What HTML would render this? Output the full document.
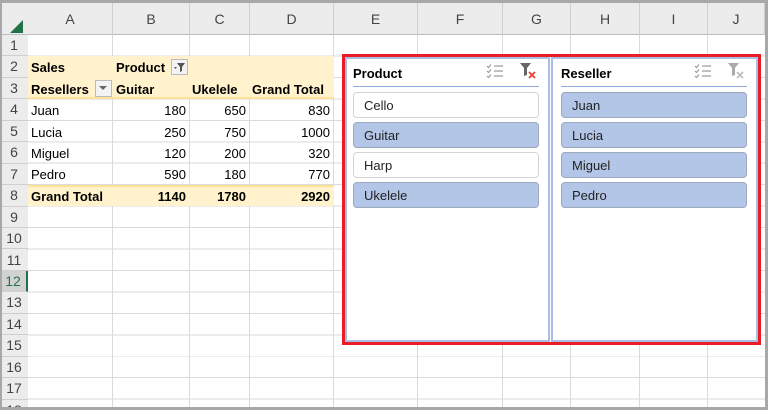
<!DOCTYPE html>
<html style="width:768px;height:410px;overflow:hidden"><head><meta charset="utf-8"><style>
*{margin:0;padding:0;box-sizing:border-box}
body{width:768px;height:410px;overflow:hidden;background:#fff;font-family:"Liberation Sans",Arial,sans-serif;position:relative}
.a{position:absolute}
.vl{position:absolute;top:35px;bottom:0;width:1px;background:#dadada}
.ch{position:absolute;top:3px;height:32px;line-height:32px;text-align:center;font-size:14px;color:#444;border-right:1px solid #cfcfcf}
.rh{position:absolute;left:0;width:28px;text-align:center;font-size:14px;color:#444;border-bottom:1px solid #cfcfcf;background:#ececec}
.t{position:absolute;font-size:13px;color:#000;line-height:21px;white-space:nowrap}
.b{font-weight:bold}
.r{text-align:right}
.it{position:absolute;height:26px;border-radius:4px;font-size:13px;line-height:25px;padding-left:10px;color:#222}
.sel{background:#b4c6e7;border:1px solid #9ba8bd}
.uns{background:#fff;border:1px solid #d4d4d4}
</style></head><body>
<div class="a" style="left:0;top:0;width:768px;height:35px;background:#ececec;border-bottom:1px solid #bdbdbd"></div>
<div class="a" style="left:0;top:0;width:768px;height:3px;background:#a8a8a8"></div>
<div class="a" style="left:0;top:35px;width:28px;height:375px;background:#ececec;border-right:1px solid #bdbdbd"></div>
<svg class="a" style="left:10px;top:20px" width="14" height="13"><polygon points="13,0 13,13 0,13" fill="#217346"/></svg>
<div class="ch" style="left:28px;width:85px">A</div>
<div class="ch" style="left:113px;width:77px">B</div>
<div class="ch" style="left:190px;width:60px">C</div>
<div class="ch" style="left:250px;width:84px">D</div>
<div class="ch" style="left:334px;width:84px">E</div>
<div class="ch" style="left:418px;width:85px">F</div>
<div class="ch" style="left:503px;width:68px">G</div>
<div class="ch" style="left:571px;width:69px">H</div>
<div class="ch" style="left:640px;width:68px">I</div>
<div class="ch" style="left:708px;width:57px">J</div>
<div class="a" style="left:28px;top:35px;right:0;bottom:0;background:repeating-linear-gradient(to bottom,transparent 0,transparent 20.45px,#dadada 20.45px,#dadada 21.45px)"></div>
<div class="vl" style="left:112px"></div><div class="vl" style="left:189px"></div><div class="vl" style="left:249px"></div><div class="vl" style="left:333px"></div><div class="vl" style="left:417px"></div><div class="vl" style="left:502px"></div><div class="vl" style="left:570px"></div><div class="vl" style="left:639px"></div><div class="vl" style="left:707px"></div>
<div class="rh" style="top:35px;height:21.45px;line-height:21px">1</div>
<div class="rh" style="top:56.45px;height:21.45px;line-height:21px">2</div>
<div class="rh" style="top:77.9px;height:21.45px;line-height:21px">3</div>
<div class="rh" style="top:99.35px;height:21.45px;line-height:21px">4</div>
<div class="rh" style="top:120.8px;height:21.45px;line-height:21px">5</div>
<div class="rh" style="top:142.25px;height:21.45px;line-height:21px">6</div>
<div class="rh" style="top:163.7px;height:21.45px;line-height:21px">7</div>
<div class="rh" style="top:185.15px;height:21.45px;line-height:21px">8</div>
<div class="rh" style="top:206.6px;height:21.45px;line-height:21px">9</div>
<div class="rh" style="top:228.05px;height:21.45px;line-height:21px">10</div>
<div class="rh" style="top:249.5px;height:21.45px;line-height:21px">11</div>
<div class="rh" style="top:270.95px;height:21.45px;line-height:21px;background:#d2d2d2;color:#217346;border-right:2px solid #217346">12</div>
<div class="rh" style="top:292.4px;height:21.45px;line-height:21px">13</div>
<div class="rh" style="top:313.85px;height:21.45px;line-height:21px">14</div>
<div class="rh" style="top:335.3px;height:21.45px;line-height:21px">15</div>
<div class="rh" style="top:356.75px;height:21.45px;line-height:21px">16</div>
<div class="rh" style="top:378.2px;height:21.45px;line-height:21px">17</div>
<div class="rh" style="top:399.65px;height:8px;line-height:21px;overflow:hidden">18</div>
<div class="a" style="left:28px;top:56px;width:306px;height:43px;background:#fff2cc;border-bottom:2px solid #ffe29a"></div>
<div class="a" style="left:28px;top:185px;width:306px;height:21px;background:#fff2cc;border-top:2px solid #ffe29a"></div>
<div class="t b" style="left:31px;top:57px">Sales</div>
<div class="t b" style="left:116px;top:57px">Product</div>
<div class="a" style="left:171px;top:59px;width:17px;height:16px;background:#f3f3f3;border:1px solid #bbb"></div>
<svg class="a" style="left:173px;top:61px" width="13" height="12"><path d="M4 2h8l-3 4v4l-2 1V6z" fill="#555"/><path d="M1 6h3l-1.5 2z" fill="#555"/></svg>
<div class="t b" style="left:31px;top:79px">Resellers</div>
<div class="a" style="left:95px;top:80px;width:17px;height:17px;background:#f3f3f3;border:1px solid #bbb"></div>
<svg class="a" style="left:99px;top:86px" width="9" height="5"><path d="M0 0h8L4 4z" fill="#666"/></svg>
<div class="t b" style="left:116px;top:79px">Guitar</div>
<div class="t b" style="left:192px;top:79px">Ukelele</div>
<div class="t b" style="left:252px;top:79px">Grand Total</div>
<div class="t" style="left:31px;top:100px">Juan</div>
<div class="t" style="left:31px;top:122px">Lucia</div>
<div class="t" style="left:31px;top:143px">Miguel</div>
<div class="t" style="left:31px;top:164px">Pedro</div>
<div class="t b" style="left:31px;top:186px">Grand Total</div>
<div class="t r" style="left:113px;width:73px;top:100px">180</div>
<div class="t r" style="left:113px;width:73px;top:122px">250</div>
<div class="t r" style="left:113px;width:73px;top:143px">120</div>
<div class="t r" style="left:113px;width:73px;top:164px">590</div>
<div class="t r b" style="left:113px;width:73px;top:186px">1140</div>
<div class="t r" style="left:190px;width:56px;top:100px">650</div>
<div class="t r" style="left:190px;width:56px;top:122px">750</div>
<div class="t r" style="left:190px;width:56px;top:143px">200</div>
<div class="t r" style="left:190px;width:56px;top:164px">180</div>
<div class="t r b" style="left:190px;width:56px;top:186px">1780</div>
<div class="t r" style="left:250px;width:80px;top:100px">830</div>
<div class="t r" style="left:250px;width:80px;top:122px">1000</div>
<div class="t r" style="left:250px;width:80px;top:143px">320</div>
<div class="t r" style="left:250px;width:80px;top:164px">770</div>
<div class="t r b" style="left:250px;width:80px;top:186px">2920</div>
<div class="a" style="left:342px;top:54px;width:419px;height:291px;border:3px solid #ec1c24;background:#fff"></div>
<div class="a" style="left:345px;top:57px;width:205px;height:285px;border:2px solid #a9bde6"></div>
<div class="a" style="left:551px;top:57px;width:207px;height:285px;border:2px solid #a9bde6"></div>
<div class="t b" style="left:353px;top:63px">Product</div>
<div class="t b" style="left:561px;top:63px">Reseller</div>
<div class="a" style="left:353px;top:86px;width:186px;height:1px;background:#8eaadb"></div>
<div class="a" style="left:561px;top:86px;width:186px;height:1px;background:#8eaadb"></div>
<svg class="a" style="left:486px;top:63px" width="18" height="16" fill="none" stroke="#9a9a9a" stroke-width="1.2"><path d="M1 3l1.5 1.5L5 1.5M1 8l1.5 1.5L5 6.5M1 13l1.5 1.5L5 11.5"/><path d="M8 3h9M8 8h9M8 13h9"/></svg>
<svg class="a" style="left:694px;top:63px" width="18" height="16" fill="none" stroke="#9a9a9a" stroke-width="1.2"><path d="M1 3l1.5 1.5L5 1.5M1 8l1.5 1.5L5 6.5M1 13l1.5 1.5L5 11.5"/><path d="M8 3h9M8 8h9M8 13h9"/></svg>
<svg class="a" style="left:519px;top:62px" width="20" height="18"><path d="M1 1h11l-4 5v7l-3 1V6z" fill="#666"/><path d="M10 10l6 6M16 10l-6 6" stroke="#e8412c" stroke-width="1.8"/></svg>
<svg class="a" style="left:727px;top:62px" width="20" height="18"><path d="M1 1h11l-4 5v7l-3 1V6z" fill="#aaa"/><path d="M10 10l6 6M16 10l-6 6" stroke="#bbb" stroke-width="1.6"/></svg>
<div class="it uns" style="left:353px;top:92px;width:186px">Cello</div>
<div class="it sel" style="left:353px;top:122px;width:186px">Guitar</div>
<div class="it uns" style="left:353px;top:152px;width:186px">Harp</div>
<div class="it sel" style="left:353px;top:182px;width:186px">Ukelele</div>
<div class="it sel" style="left:561px;top:92px;width:186px">Juan</div>
<div class="it sel" style="left:561px;top:122px;width:186px">Lucia</div>
<div class="it sel" style="left:561px;top:152px;width:186px">Miguel</div>
<div class="it sel" style="left:561px;top:182px;width:186px">Pedro</div>
<div class="a" style="left:0;top:407px;width:768px;height:3px;background:#a8a8a8"></div>
<div class="a" style="left:765px;top:0;width:3px;height:410px;background:#a8a8a8"></div>
<div class="a" style="left:0;top:0;width:2px;height:410px;background:#a8a8a8"></div>
</body></html>
